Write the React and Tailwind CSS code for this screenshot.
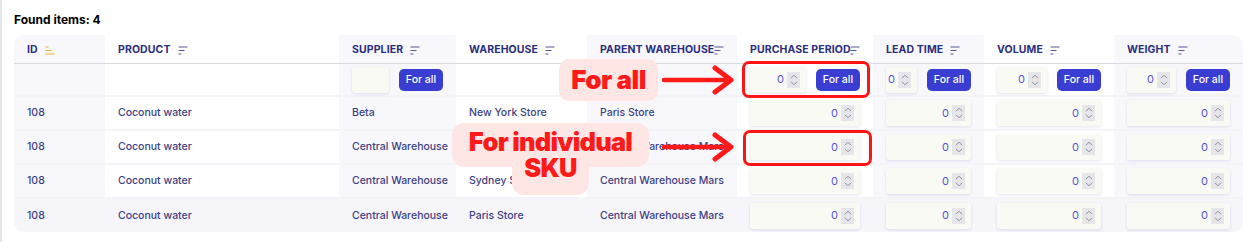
import React from 'react';

const GRID = 'grid grid-cols-[91px_234px_117px_131px_150px_136px_111px_130px_129px]';

const headers = ['ID', 'Product', 'Supplier', 'Warehouse', 'Parent warehouse', 'Purchase period', 'Lead time', 'Volume', 'Weight'];

const rows = [
  { id: 108, product: 'Coconut water', supplier: 'Beta', warehouse: 'New York Store', parent: 'Paris Store' },
  { id: 108, product: 'Coconut water', supplier: 'Central Warehouse', warehouse: 'London Store', parent: 'Central Warehouse Mars' },
  { id: 108, product: 'Coconut water', supplier: 'Central Warehouse', warehouse: 'Sydney Store', parent: 'Central Warehouse Mars' },
  { id: 108, product: 'Coconut water', supplier: 'Central Warehouse', warehouse: 'Paris Store', parent: 'Central Warehouse Mars' },
];

// alternating column shading
const colBg = (i) => (i % 2 === 0 ? 'bg-[#f8f8fc]' : 'bg-white');

function SortIcon({ active }) {
  if (active) {
    return (
      <svg width="10" height="9" viewBox="0 0 10 9" className="shrink-0">
        <path d="M0.5 1h3M0.5 4.5h6M0.5 8h9" stroke="#e9b22f" strokeWidth="1.2" />
      </svg>
    );
  }
  return (
    <svg width="10" height="9" viewBox="0 0 10 9" className="shrink-0">
      <path d="M0.5 1h9M0.5 4.5h6M0.5 8h3" stroke="#55579a" strokeWidth="1.2" />
    </svg>
  );
}

function Spinner() {
  return (
    <span className="ml-[3px] flex h-[16px] w-[13px] shrink-0 flex-col items-center justify-center gap-[2px] bg-[#e5e5ea]">
      <svg width="8" height="5" viewBox="0 0 8 5">
        <path d="M1 4.2L4 1.2L7 4.2" fill="none" stroke="#8c8c98" strokeWidth="1" />
      </svg>
      <svg width="8" height="5" viewBox="0 0 8 5">
        <path d="M1 0.8L4 3.8L7 0.8" fill="none" stroke="#8c8c98" strokeWidth="1" />
      </svg>
    </span>
  );
}

function NumInput({ className = '' }) {
  return (
    <div className={`flex h-[26px] min-w-0 items-center justify-end rounded-[3px] bg-[#fafaf4] pr-[6px] shadow-[0_1px_3px_rgba(90,90,170,0.18)] ${className}`}>
      <span className="text-[11px] leading-none text-[#5252d6]">0</span>
      <Spinner />
    </div>
  );
}

function ForAll() {
  return (
    <button className="h-[22px] w-[44px] shrink-0 rounded-[5px] bg-[#3a3dd1] text-[10.5px] font-medium text-white">
      For all
    </button>
  );
}

function FilterCell() {
  return (
    <div className="flex items-center gap-[10px]">
      <NumInput className="flex-1" />
      <ForAll />
    </div>
  );
}

function Arrow({ className }) {
  return (
    <svg className={className} width="80" height="32" viewBox="0 0 80 32">
      <path d="M4 16H70" stroke="#ff1a1a" strokeWidth="4.5" strokeLinecap="round" />
      <path d="M55 4L71 16L55 28" fill="none" stroke="#ff1a1a" strokeWidth="5" strokeLinecap="round" strokeLinejoin="round" />
    </svg>
  );
}

export default function App() {
  const last = rows.length - 1;
  return (
    <div className="relative h-[242px] w-[1243px] overflow-hidden border-l-2 border-[#e6e6ea] bg-white font-['Inter',sans-serif]">
      <div className="pl-3 pt-[13px]">
        <h3 className="text-[12px] font-bold leading-[14px] text-black">Found items: 4</h3>

        <div className="mt-[8px] w-[1229px] overflow-hidden rounded-[10px]">
          {/* header */}
          <div className={`${GRID} border-b border-[#d9d9e2]`}>
            {headers.map((h, i) => (
              <div key={h} className={`flex h-[28px] items-center gap-[7px] px-[13px] pt-[2px] ${colBg(i)}`}>
                <span className="min-w-0 whitespace-nowrap text-[10.5px] font-bold uppercase tracking-[0.01em] text-[#2c2e7b]">{h}</span>
                <SortIcon active={i === 0} />
              </div>
            ))}
          </div>

          {/* filter row */}
          <div className={`${GRID} border-b-2 border-[#f3f3f8]`}>
            {headers.map((h, i) => (
              <div key={h} className={`flex h-[31px] flex-col justify-center px-[13px] ${colBg(i)}`}>
                {i === 2 && (
                  <div className="flex items-center gap-[10px]">
                    <div className="h-[26px] w-[38px] rounded-[3px] bg-[#fafaf4] shadow-[0_1px_3px_rgba(90,90,170,0.18)]" />
                    <ForAll />
                  </div>
                )}
                {i >= 5 && <FilterCell />}
              </div>
            ))}
          </div>

          {/* data rows */}
          {rows.map((r, ri) => {
            const cells = [r.id, r.product, r.supplier, r.warehouse, r.parent];
            return (
              <div key={ri} className={`${GRID} ${ri === last ? '' : 'border-b-2 border-[#f3f3f8]'}`}>
                {headers.map((h, i) => (
                  <div
                    key={h}
                    className={`flex flex-col justify-center px-[13px] ${ri === last ? 'h-[33px] bg-[#f5f5fa]' : `h-[32px] ${colBg(i)}`}`}
                  >
                    {i < 5 ? (
                      <span className="whitespace-nowrap text-[10.5px] font-medium text-[#3d3f84]">{cells[i]}</span>
                    ) : (
                      <NumInput />
                    )}
                  </div>
                ))}
              </div>
            );
          })}
        </div>
      </div>

      {/* annotation: for all */}
      <div className="absolute left-[557px] top-[59px] flex h-[42px] w-[99px] items-center justify-center rounded-[10px] bg-[#fde6e3]">
        <span className="text-[26px] font-black leading-none tracking-[-0.02em] text-[#ff1a1a]">For all</span>
      </div>
      <Arrow className="absolute left-[658px] top-[64px]" />
      <div className="absolute left-[740px] top-[61px] h-[37px] w-[128px] rounded-[7px] border-[3px] border-[#ff1414]" />

      {/* annotation: for individual SKU */}
      <div className="absolute left-[450px] top-[123px] h-[44px] w-[197px] rounded-[12px] bg-[#fde6e3]" />
      <div className="absolute left-[510px] top-[158px] h-[37px] w-[77px] rounded-[12px] bg-[#fde6e3]" />
      <div className="absolute left-[450px] top-[129px] w-[197px] text-center text-[25.5px] font-black leading-[26px] tracking-[-0.03em] text-[#ff1a1a]">
        For individual
        <br />
        SKU
      </div>
      <Arrow className="absolute left-[658px] top-[131px]" />
      <div className="absolute left-[741px] top-[130px] h-[36px] w-[129px] rounded-[7px] border-[3px] border-[#ff1414]" />
    </div>
  );
}
